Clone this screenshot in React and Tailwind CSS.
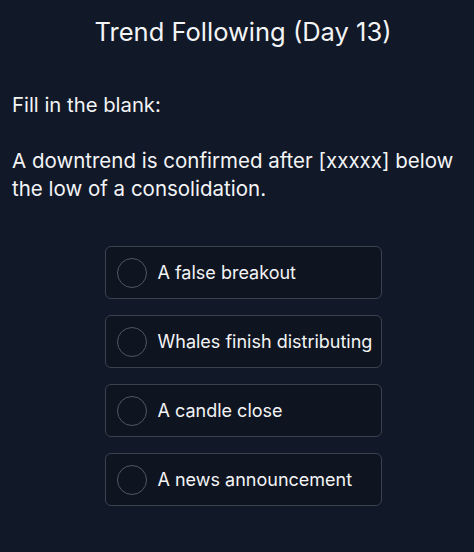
import React from "react";

const options = [
  "A false breakout",
  "Whales finish distributing",
  "A candle close",
  "A news announcement",
];

export default function App() {
  return (
    <div
      className="min-h-[552px] w-full bg-[#111827] pl-3 pt-[16px] text-[#f3f4f6]"
      style={{ fontFamily: "Inter, 'Noto Sans', sans-serif" }}
    >
      <h1 className="text-center text-[25.5px] leading-8 font-normal">Trend Following (Day 13)</h1>

      <p className="mt-[43px] text-[20.3px] leading-7">Fill in the blank:</p>

      <p className="mt-[28px] text-[20.5px] leading-7">
        A downtrend is confirmed after [xxxxx] below the low of a consolidation.
      </p>

      <div className="mx-auto mt-[43px] flex w-[277px] flex-col gap-4">
        {options.map((opt) => (
          <button
            key={opt}
            className="flex h-[53px] items-center gap-[11px] rounded-md border border-[#3a4250] bg-[#0f1520] pl-[11px] text-left"
          >
            <span className="h-[30px] w-[30px] shrink-0 rounded-full border border-[#4f5764]" />
            <span className="text-lg text-[#f3f4f6]">{opt}</span>
          </button>
        ))}
      </div>
    </div>
  );
}
